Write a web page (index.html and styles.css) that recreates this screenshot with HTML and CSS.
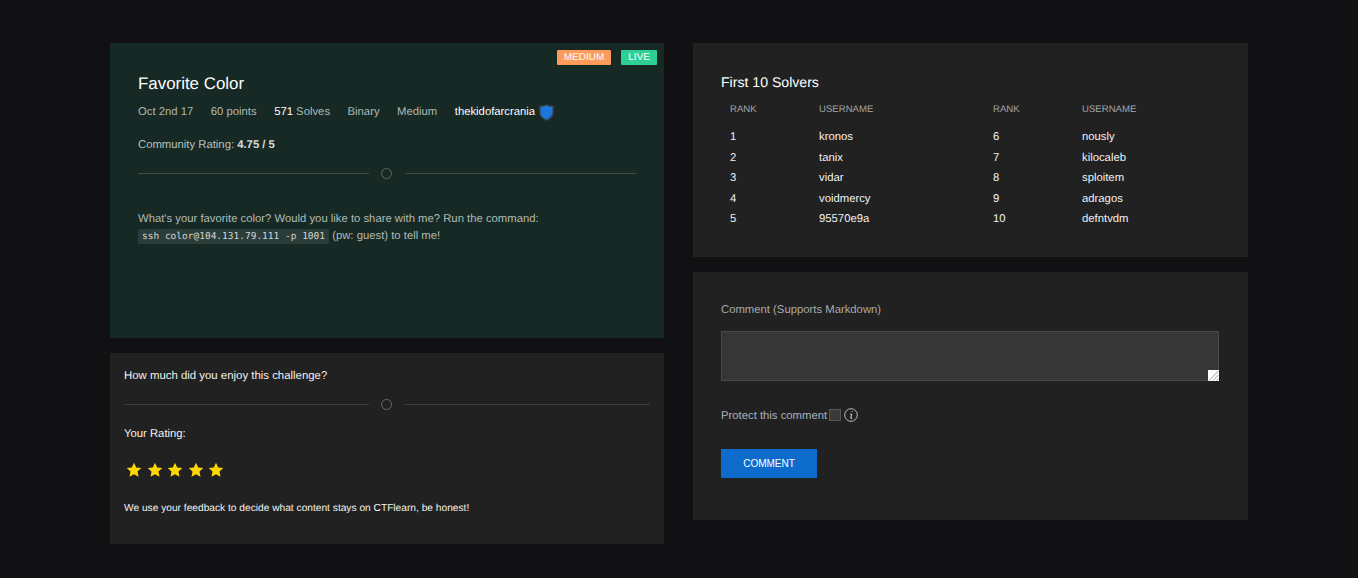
FILE: index.html
```html
<!DOCTYPE html>
<html lang="en">
<head>
<meta charset="utf-8">
<title>Favorite Color</title>
<link rel="stylesheet" href="styles.css">
</head>
<body>
<main class="layout">
  <section class="column">
    <article class="card challenge">
      <div class="badges"><span class="badge badge-medium">MEDIUM</span><span class="badge badge-live">LIVE</span></div>
      <h1 class="title">Favorite Color</h1>
      <div class="meta">
        <span>Oct 2nd 17</span>
        <span>60 points</span>
        <span><b class="solves">571</b> Solves</span>
        <span>Binary</span>
        <span>Medium</span>
        <span class="author">thekidofarcrania
          <svg class="shield" width="15" height="17" viewBox="0 0 15 17"><path d="M7.500 1C5.600 2.200 3.200 2.500 1 2.300v5.900c0 3.500 2.600 6.200 6.500 7.900 3.900-1.700 6.500-4.400 6.500-7.900V2.300C11.800 2.500 9.400 2.200 7.500 1z" fill="#1a78dc" stroke="#3a4a58" stroke-width="1.300"/></svg>
        </span>
      </div>
      <p class="rating">Community Rating: <b>4.75 / 5</b></p>
      <div class="divider"><i></i><u></u><i></i></div>
      <p class="desc">What's your favorite color? Would you like to share with me? Run the command:<br><code>ssh color@104.131.79.111 -p 1001</code> (pw: guest) to tell me!</p>
    </article>
    <article class="card feedback">
      <p class="ask">How much did you enjoy this challenge?</p>
      <div class="divider"><i></i><u></u><i></i></div>
      <p class="your">Your Rating:</p>
      <div class="stars">
        <svg viewBox="0 0 16 16" width="16" height="16"><path class="star" d="M8 .8l2.200 4.700 5.100.6-3.800 3.500 1 5.100L8 12.200l-4.500 2.500 1-5.100L.7 6.100l5.100-.6z"/></svg>
        <svg viewBox="0 0 16 16" width="16" height="16"><path class="star" d="M8 .8l2.200 4.700 5.100.6-3.800 3.500 1 5.100L8 12.200l-4.500 2.500 1-5.100L.7 6.100l5.100-.6z"/></svg>
        <svg viewBox="0 0 16 16" width="16" height="16"><path class="star" d="M8 .8l2.200 4.700 5.100.6-3.800 3.500 1 5.100L8 12.200l-4.500 2.500 1-5.100L.7 6.100l5.100-.6z"/></svg>
        <svg viewBox="0 0 16 16" width="16" height="16"><path class="star" d="M8 .8l2.200 4.700 5.100.6-3.800 3.500 1 5.100L8 12.200l-4.500 2.500 1-5.100L.7 6.100l5.100-.6z"/></svg>
        <svg viewBox="0 0 16 16" width="16" height="16"><path class="star" d="M8 .8l2.200 4.700 5.100.6-3.800 3.500 1 5.100L8 12.200l-4.500 2.500 1-5.100L.7 6.100l5.100-.6z"/></svg>
      </div>
      <p class="note">We use your feedback to decide what content stays on CTFlearn, be honest!</p>
    </article>
  </section>
  <section class="column">
    <article class="card solvers">
      <h2 class="subtitle">First 10 Solvers</h2>
      <div class="table">
        <div class="th">RANK</div><div class="th">USERNAME</div><div class="th">RANK</div><div class="th">USERNAME</div>
        <div>1</div><div>kronos</div><div>6</div><div>nously</div>
        <div>2</div><div>tanix</div><div>7</div><div>kilocaleb</div>
        <div>3</div><div>vidar</div><div>8</div><div>sploitem</div>
        <div>4</div><div>voidmercy</div><div>9</div><div>adragos</div>
        <div>5</div><div>95570e9a</div><div>10</div><div>defntvdm</div>
      </div>
    </article>
    <article class="card comment">
      <label class="comment-label" for="c">Comment (Supports Markdown)</label>
      <div class="area-wrap">
        <textarea id="c" class="area"></textarea>
        <svg class="grip" width="11" height="11" viewBox="0 0 11 11"><rect width="11" height="11" fill="#fff"/><path d="M1 10.500 10.500 1M5 10.500 10.500 5M8.500 10.500l2-2" stroke="#999" stroke-width="1" fill="none"/></svg>
      </div>
      <div class="protect">
        <span class="protect-text">Protect this comment</span><span class="check"></span>
        <svg class="info" width="14" height="14" viewBox="0 0 14 14"><circle cx="7" cy="7" r="6.300" fill="none" stroke="#bbb" stroke-width="1"/><path d="M7.600 3.500h.9M6.100 6.200h1.600L6.800 10.300h1.400" stroke="#ddd" stroke-width="1" fill="none"/></svg>
      </div>
      <button class="btn" type="button">COMMENT</button>
    </article>
  </section>
</main>
</body>
</html>
```
FILE: styles.css
```css
* { box-sizing: border-box; }
html, body { margin: 0; height: 100%; }
body {
  background: #111113;
  font-family: "Liberation Sans", Arial, sans-serif;
  font-size: 11.300px;
  color: #f2f2f2;
  overflow: hidden;
  text-rendering: geometricPrecision;
}
p, h1, h2 { margin: 0; font-weight: 400; }
.layout {
  display: grid;
  grid-template-columns: 554.500px 555px;
  column-gap: 28.500px;
  align-items: start;
  padding: 43px 0 0 109.500px;
}
.column { display: flex; flex-direction: column; gap: 15px; }
.card { background: #212121; }

.challenge {
  position: relative;
  height: 295px;
  background: #172925;
  padding: 31px 28.500px 0 28.500px;
  color: #adb9b4;
}
.badges {
  position: absolute;
  top: 7px;
  right: 7px;
  display: flex;
  gap: 10px;
}
.badge {
  height: 15px;
  line-height: 15px;
  padding: 0 7px;
  font-size: 10px;
  color: #fff;
  border-radius: 1px;
}
.badge-medium { background: #fb9c5b; }
.badge-live { background: #2ecf94; }
.title { font-size: 16.900px; line-height: 20px; color: #fff; }
.meta {
  display: flex;
  align-items: center;
  gap: 17.500px;
  margin-top: 9px;
  height: 18px;
}
.solves { font-weight: 400; color: #fff; }
.author { display: flex; align-items: center; gap: 4px; color: #fff; }
.shield { display: block; }
.rating { margin-top: 15px; line-height: 18px; color: #b8c0bb; }
.rating b { color: #d8dcd9; }
.divider {
  display: flex;
  align-items: center;
  gap: 12.500px;
  margin-top: 13px;
  height: 12px;
}
.divider i { flex: 1; height: 1px; background: #3d4d47; }
.divider u {
  width: 11px;
  height: 11px;
  border: 1px solid #5e6a66;
  border-radius: 50%;
}
.desc { margin-top: 32px; line-height: 17px; color: #b1bbb6; }
.desc code {
  font-family: "DejaVu Sans Mono", monospace;
  font-size: 9.500px;
  background: #2b3d38;
  color: #d0d6d3;
  padding: 2px 4px;
  border-radius: 1px;
}

.feedback { height: 191px; padding: 16px 14.500px 0; }
.ask { line-height: 15px; font-size: 11.400px; }
.feedback .divider { margin-top: 14px; }
.feedback .divider i { background: #3c3c3c; }
.feedback .divider u { border-color: #6a6a6a; }
.your { margin-top: 17px; line-height: 15px; }
.stars { display: flex; gap: 4.600px; margin: 20px 0 0 2px; height: 16px; }
.star { fill: #ffd800; }
.note { margin-top: 24px; font-size: 10.200px; line-height: 14px; }

.solvers { height: 214px; padding: 30px 28.500px 0; }
.subtitle { font-size: 14.100px; line-height: 18px; color: #fff; }
.table {
  display: grid;
  grid-template-columns: 89px 174px 89px 1fr;
  grid-template-rows: 23px;
  grid-auto-rows: 20.500px;
  padding: 0 9px;
  margin-top: 13px;
  line-height: 20.500px;
}
.th {
  font-size: 9.600px;
  color: #a5a5a5;
  line-height: 12px;
}

.comment { height: 248px; padding: 31px 28.500px 0; }
.comment-label { display: block; color: #aaa; line-height: 15px; }
.area-wrap { position: relative; margin-top: 13px; height: 50px; }
.area {
  display: block;
  width: 100%;
  height: 50px;
  resize: none;
  background: #363636;
  border: 1px solid #4a4a4a;
  border-radius: 0;
  outline: 0;
}
.grip { position: absolute; right: 0; bottom: 0; display: block; }
.protect {
  display: flex;
  align-items: center;
  gap: 2px;
  margin-top: 27px;
  height: 14px;
  color: #aab1bb;
}
.protect-text { margin-top: 2px; }
.check {
  width: 12px;
  height: 12px;
  background: #3a3a3a;
  border: 1px solid #555;
}
.info { margin-left: 1px; }
.btn {
  display: block;
  width: 96px;
  height: 29px;
  margin-top: 27px;
  padding: 0;
  background: #0d6bcb;
  border: 0;
  border-radius: 0;
  color: #fff;
  font: 400 10px "Liberation Sans", Arial, sans-serif;
}
```
